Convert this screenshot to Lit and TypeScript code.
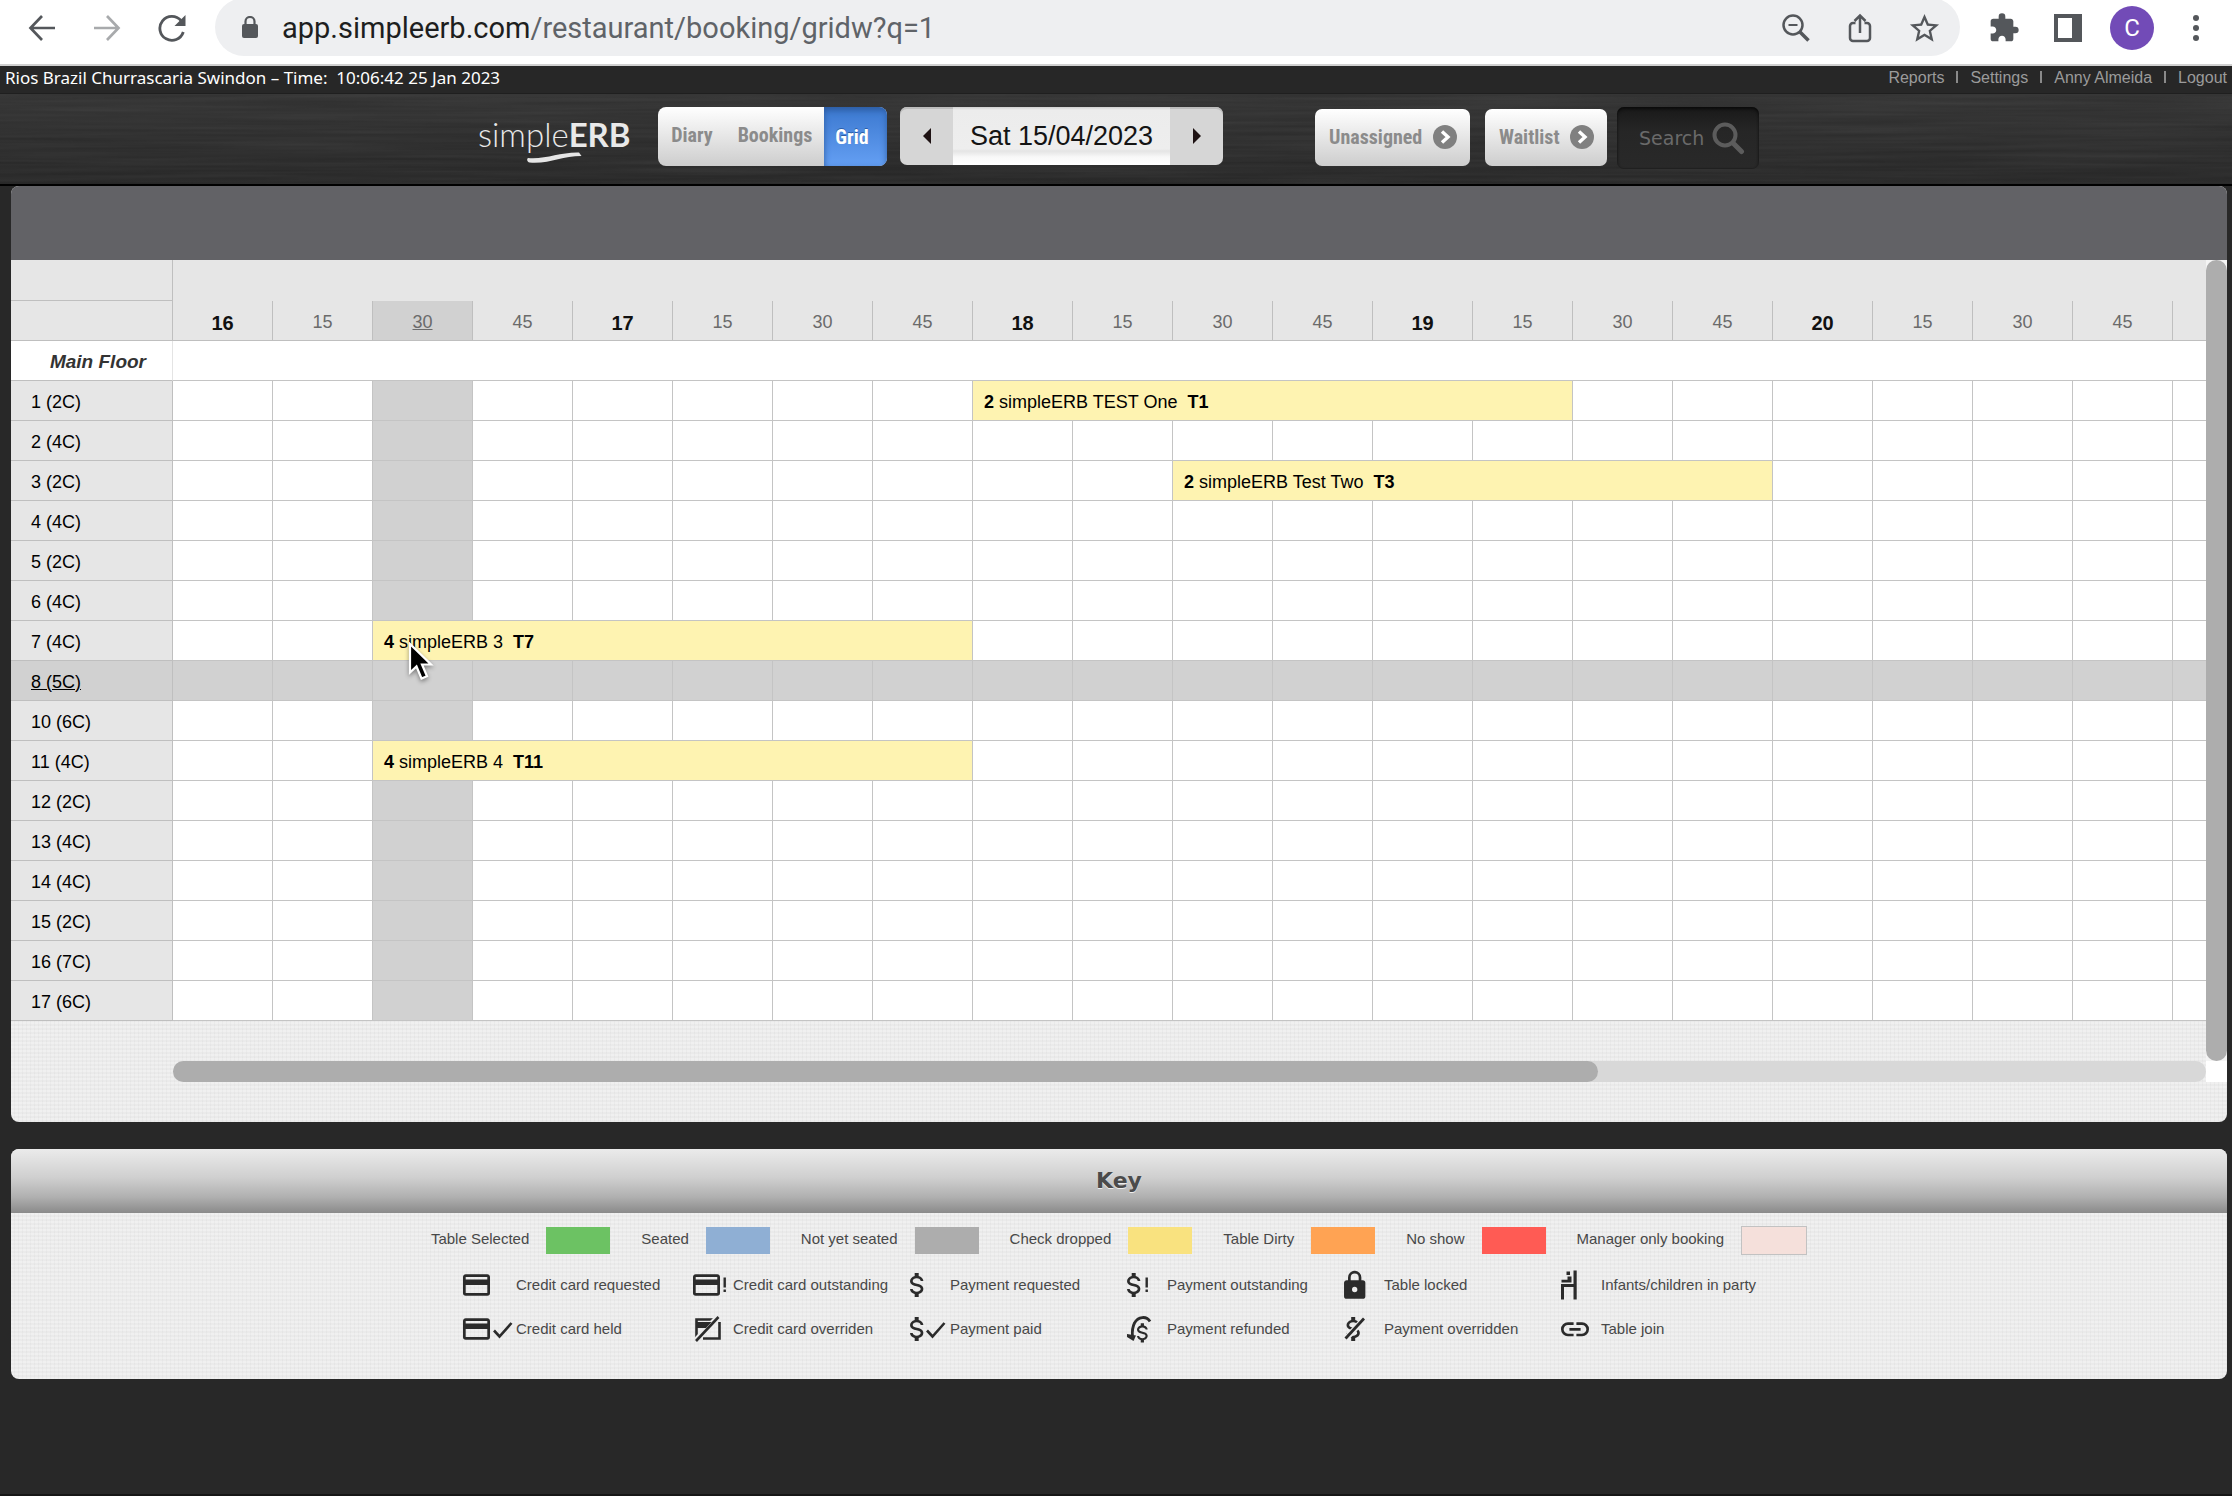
import { LitElement, html, css, svg, nothing, TemplateResult } from "lit";
import { customElement, property } from "lit/decorators.js";
import { classMap } from "lit/directives/class-map.js";
import { styleMap } from "lit/directives/style-map.js";

interface Booking {
  slot: number;
  span: number;
  covers: number;
  name: string;
  table: string;
  pointer?: boolean;
}

interface TableRow {
  label: string;
  hover?: boolean;
  booking?: Booking;
}

const SLOTS = ["16", "15", "30", "45", "17", "15", "30", "45", "18", "15", "30", "45", "19", "15", "30", "45", "20", "15", "30", "45"];
const HOVER_SLOT = 2;

const ROWS: TableRow[] = [
  { label: "1 (2C)", booking: { slot: 8, span: 6, covers: 2, name: "simpleERB TEST One", table: "T1" } },
  { label: "2 (4C)" },
  { label: "3 (2C)", booking: { slot: 10, span: 6, covers: 2, name: "simpleERB Test Two", table: "T3" } },
  { label: "4 (4C)" },
  { label: "5 (2C)" },
  { label: "6 (4C)" },
  { label: "7 (4C)", booking: { slot: 2, span: 6, covers: 4, name: "simpleERB 3", table: "T7", pointer: true } },
  { label: "8 (5C)", hover: true },
  { label: "10 (6C)" },
  { label: "11 (4C)", booking: { slot: 2, span: 6, covers: 4, name: "simpleERB 4", table: "T11" } },
  { label: "12 (2C)" },
  { label: "13 (4C)" },
  { label: "14 (4C)" },
  { label: "15 (2C)" },
  { label: "16 (7C)" },
  { label: "17 (6C)" },
];

const STATUSES = [
  { label: "Table Selected", color: "#6cc263" },
  { label: "Seated", color: "#8fafd4" },
  { label: "Not yet seated", color: "#adadad" },
  { label: "Check dropped", color: "#f9e27f" },
  { label: "Table Dirty", color: "#ffa353" },
  { label: "No show", color: "#ff5b54" },
  { label: "Manager only booking", color: "#f5e0db", outlined: true },
];

const CARD = "M20,8H4V6H20M20,18H4V12H20M20,4H4C2.89,4 2,4.89 2,6V18A2,2 0 0,0 4,20H20A2,2 0 0,0 22,18V6C22,4.89 21.1,4 20,4Z";
const DOLLAR = "M7,15H9C9,16.08 10.37,17 12,17C13.63,17 15,16.08 15,15C15,13.9 13.96,13.5 11.76,12.97C9.64,12.44 7,11.78 7,9C7,7.21 8.47,5.69 10.5,5.18V3H13.5V5.18C15.53,5.69 17,7.21 17,9H15C15,7.92 13.63,7 12,7C10.37,7 9,7.92 9,9C9,10.1 10.04,10.5 12.24,11.03C14.36,11.56 17,12.22 17,15C17,16.79 15.53,18.31 13.5,18.82V21H10.5V18.82C8.47,18.31 7,16.79 7,15Z";
const LOCK = "M12,17A2,2 0 0,0 14,15C14,13.89 13.1,13 12,13A2,2 0 0,0 10,15A2,2 0 0,0 12,17M18,8A2,2 0 0,1 20,10V20A2,2 0 0,1 18,22H6A2,2 0 0,1 4,20V10C4,8.89 4.9,8 6,8H7V6A5,5 0 0,1 12,1A5,5 0 0,1 17,6V8H18M12,3A3,3 0 0,0 9,6V8H15V6A3,3 0 0,0 12,3Z";
const LINK = "M3.9,12C3.9,10.29 5.29,8.9 7,8.9H11V7H7A5,5 0 0,0 2,12A5,5 0 0,0 7,17H11V15.1H7C5.29,15.1 3.9,13.71 3.9,12M8,13H16V11H8V13M17,7H13V8.9H17C18.71,8.9 20.1,10.29 20.1,12C20.1,13.71 18.71,15.1 17,15.1H13V17H17A5,5 0 0,0 22,12A5,5 0 0,0 17,7Z";
const PUZZLE = "M20.5,11H19V7C19,5.89 18.1,5 17,5H13V3.5A2.5,2.5 0 0,0 10.5,1A2.5,2.5 0 0,0 8,3.5V5H4A2,2 0 0,0 2,7V10.8H3.5C5,10.8 6.2,12 6.2,13.5C6.2,15 5,16.2 3.5,16.2H2V20A2,2 0 0,0 4,22H7.8V20.5C7.8,19 9,17.8 10.5,17.8C12,17.8 13.2,19 13.2,20.5V22H17A2,2 0 0,0 19,20V16H20.5A2.5,2.5 0 0,0 23,13.5A2.5,2.5 0 0,0 20.5,11Z";
const STAR = "M22 9.24l-7.19-.62L12 2 9.19 8.63 2 9.24l5.46 4.73L5.82 21 12 17.27 18.18 21l-1.63-7.03L22 9.24zM12 15.4l-3.76 2.27 1-4.28-3.32-2.88 4.38-.38L12 6.1l1.71 4.04 4.38.38-3.32 2.88 1 4.28L12 15.4z";

/* Legend glyphs share a 52x32 canvas whose left edge is the glyph edge. */
const card = svg`<path transform="translate(-2.7 -.2) scale(1.35)" d=${CARD}/>`;
const dollar = svg`<path transform="translate(-9.3 0) scale(1.333)" d=${DOLLAR}/>`;
const bang = (x: number) => svg`<path d="M${x} 8.500h2.400v10h-2.400zM${x} 20.500h2.400v2.600h-2.400z"/>`;
const tick = (x: number) => svg`<path d="M${x + 1} 17.500l5.500 6L${x + 18.500} 10" fill="none" stroke="currentColor" stroke-width="2.600"/>`;

const GLYPHS: Record<string, TemplateResult> = {
  card: svg`${card}`,
  cardBang: svg`${card}${bang(30.5)}`,
  cardTick: svg`${card}${tick(30)}`,
  cardStruck: svg`
    <path d="M3.500 26V6.500h20M3 10.500h18M3 13h16M10 25.500h16.500V9" fill="none" stroke="currentColor" stroke-width="2.600"/>
    <path d="M3 27.500L25 4" fill="none" stroke="#ececec" stroke-width="6"/>
    <path d="M3 28L25.500 4" fill="none" stroke="currentColor" stroke-width="2.600"/>
    <path d="M4 9h14.500l-5.500 6H4z"/>`,
  dollar: svg`${dollar}`,
  dollarBang: svg`${dollar}${bang(18.5)}`,
  dollarTick: svg`${dollar}${tick(16)}`,
  refund: svg`
    <g transform="translate(10 7) scale(.8)">${dollar}</g>
    <path d="M23 8.500C19.500 2.500 11 3.500 7.500 10C5.500 14 5 18 5.500 23" fill="none" stroke="currentColor" stroke-width="2.800"/>
    <path d="M0 21l9 1.500L6.500 28L0 24z"/>`,
  dollarStruck: svg`
    <g transform="translate(2.500 0)">${dollar}</g>
    <path d="M2 25.500L20 6" fill="none" stroke="#ececec" stroke-width="6"/>
    <path d="M1.500 25.500L20 5.500" fill="none" stroke="currentColor" stroke-width="2.800"/>`,
  lock: svg`<path transform="translate(-5.300 .500) scale(1.333)" d=${LOCK}/>`,
  chair: svg`<path d="M12.500 1.500h3.200v29h-3.200v-12.500h-9.500v12.500h-3v-15.500h12.500zM5.500 2.500h3.500v3.500h-3.500zM6.500 7.500h4v6h-10v-2.800h6z"/>`,
  link: svg`<path transform="translate(-2.800 -.500) scale(1.400)" d=${LINK}/>`,
};

const KEY_ITEMS: [string, string][] = [
  ["card", "Credit card requested"],
  ["cardBang", "Credit card outstanding"],
  ["dollar", "Payment requested"],
  ["dollarBang", "Payment outstanding"],
  ["lock", "Table locked"],
  ["chair", "Infants/children in party"],
  ["cardTick", "Credit card held"],
  ["cardStruck", "Credit card overriden"],
  ["dollarTick", "Payment paid"],
  ["refund", "Payment refunded"],
  ["dollarStruck", "Payment overridden"],
  ["link", "Table join"],
];

const resets = css`
  *, *::before, *::after { box-sizing: border-box; }
  button { font: inherit; color: inherit; background: none; border: 0; padding: 0; margin: 0; cursor: pointer; }
  a { color: inherit; text-decoration: none; }
  svg { display: block; flex: none; }
  ul { list-style: none; margin: 0; padding: 0; }
`;

@customElement("browser-bar")
export class BrowserBar extends LitElement {
  static styles = [resets, css`
    :host { display: block; }
    .bar {
      display: flex; align-items: flex-start; height: 66px; overflow: hidden;
      background: #fff; border-bottom: 2px solid #d0d0d0; color: #54575b;
    }
    .nav { display: flex; width: 215px; padding-left: 20px; height: 56px; align-items: center; gap: 21px; }
    .nav button { width: 44px; display: flex; justify-content: center; }
    .off { color: #a8aaac; }
    .pill {
      flex: 1; display: flex; align-items: center; height: 58px; margin-top: -2px;
      padding: 2px 16px 0 24px; border-radius: 29px; background: #eeeff1;
    }
    .url {
      flex: 1; margin-left: 21px; white-space: nowrap; color: #5f6368;
      font: 29px/36px Roboto, "Liberation Sans", sans-serif;
    }
    .host { color: #1d1e20; }
    .acts { display: flex; gap: 24px; }
    .acts button { width: 40px; height: 40px; display: grid; place-items: center; }
    .tools { display: flex; align-items: center; gap: 20px; height: 56px; padding: 0 14px 0 22px; }
    .tools button { width: 44px; height: 44px; display: grid; place-items: center; }
    .tools .face {
      border-radius: 50%; background: #724bb7; color: #fff;
      font: 24px/44px Roboto, "Liberation Sans", sans-serif;
    }
  `];

  render() {
    return html`
      <div class="bar">
        <div class="nav">
          <button aria-label="Back">
            <svg width="28" height="28" viewBox="0 0 28 28" fill="none" stroke="currentColor" stroke-width="2.700"><path d="M27 14H2.500M14 2L2.500 14L14 26"/></svg>
          </button>
          <button class="off" aria-label="Forward">
            <svg width="28" height="28" viewBox="0 0 28 28" fill="none" stroke="currentColor" stroke-width="2.700"><path d="M1 14H25.500M14 2L25.500 14L14 26"/></svg>
          </button>
          <button aria-label="Reload">
            <svg width="28" height="28" viewBox="0 0 28 28" fill="none" stroke="currentColor" stroke-width="2.800"><path d="M25.300 18A12 12 0 1 1 23 6.500"/><path d="M27.500 1v11h-11z" fill="currentColor" stroke="none"/></svg>
          </button>
        </div>
        <div class="pill">
          <svg width="22" height="24" viewBox="0 0 22 24"><rect x="3" y="8" width="16" height="14" rx="2" fill="currentColor"/><path d="M6.500 9V5.500a4.500 4.500 0 0 1 9 0V9" fill="none" stroke="currentColor" stroke-width="2.200"/></svg>
          <div class="url" role="textbox" aria-label="Address" tabindex="0"><span class="host">app.simpleerb.com</span>/restaurant/booking/gridw?q=1</div>
          <div class="acts">
            <button aria-label="Zoom out">
              <svg width="30" height="30" viewBox="0 0 30 30" fill="none" stroke="currentColor"><circle cx="12" cy="12" r="9.500" stroke-width="2.500"/><path d="M7.500 12h9" stroke-width="2"/><path d="M19 19l8.500 8.500" stroke-width="3.500"/></svg>
            </button>
            <button aria-label="Share">
              <svg width="26" height="32" viewBox="0 0 26 32" fill="none" stroke="currentColor" stroke-width="2.500"><path d="M8.500 11H6a3 3 0 0 0-3 3v12a3 3 0 0 0 3 3h14a3 3 0 0 0 3-3V14a3 3 0 0 0-3-3h-2.500M13 21V3.500M7.500 9L13 3.500L18.500 9"/></svg>
            </button>
            <button aria-label="Bookmark">
              <svg width="35" height="35" viewBox="0 0 24 24" fill="currentColor"><path d=${STAR}/></svg>
            </button>
          </div>
        </div>
        <div class="tools">
          <button aria-label="Extensions"><svg width="32" height="32" viewBox="0 0 24 24" fill="currentColor"><path d=${PUZZLE}/></svg></button>
          <button aria-label="Side panel"><svg width="28" height="28" viewBox="0 0 28 28" fill="currentColor"><path fill-rule="evenodd" d="M0 0h28v28H0zM4 4v20h14V4z"/></svg></button>
          <button class="face" aria-label="Profile">C</button>
          <button aria-label="Menu"><svg width="8" height="28" viewBox="0 0 8 28" fill="currentColor"><circle cx="4" cy="4" r="3"/><circle cx="4" cy="14" r="3"/><circle cx="4" cy="24" r="3"/></svg></button>
        </div>
      </div>`;
  }
}

@customElement("app-header")
export class AppHeader extends LitElement {
  static styles = [resets, css`
    :host { display: block; font-family: "Liberation Sans", Arial, sans-serif; }
    .top {
      display: flex; justify-content: space-between; height: 28px; padding: 0 5px;
      background: #272727; border-bottom: 1px solid #1f1f1f;
    }
    .venue { color: #fff; font: 400 17px/24px "Noto Sans", "Open Sans", sans-serif; white-space: pre; }
    .links { display: flex; font-size: 16px; line-height: 23px; color: #9b9b9b; }
    .links li + li::before { content: ""; display: inline-block; width: 2px; height: 12px; margin: 0 12px; background: #8a8a8a; }
    .main {
      position: relative; display: flex; justify-content: center; height: 92px; padding: 13px 6px 0 11px;
      background: linear-gradient(#303030, #242424); border-bottom: 2px solid #000;
    }
    .grain { position: absolute; inset: 0; width: 100%; height: 100%; opacity: .1; }
    .logo { position: relative; width: 180px; color: #e9e9e9; font: 300 33px/54px Lato, "Open Sans", sans-serif; }
    .logo b { font-weight: 700; }
    .swoosh { position: absolute; left: 48px; top: 44px; }
    .cond { font-family: "Liberation Sans Narrow", "Roboto Condensed", "DejaVu Sans Condensed", sans-serif; font-weight: 700; font-size: 20px; color: #8b8b8b; }
    .tabs { position: relative; display: grid; grid-template-columns: 68fr 98fr 63fr; width: 229px; height: 59px; border-radius: 8px; overflow: hidden; background: linear-gradient(#fff, #cdcdcd); }
    .tabs a { display: grid; place-items: center; padding-bottom: 4px; }
    .tabs a.on { padding: 0 7px 0 0; color: #fff; background: linear-gradient(#3b78cf, #649ff3); box-shadow: inset 0 3px 6px #2c5a9e; text-shadow: 0 -1px 0 #2b5da8; }
    .date { position: relative; display: flex; width: 323px; height: 58px; margin-left: 13px; border-radius: 7px; overflow: hidden; background: #d6d6d6; box-shadow: inset 0 2px 0 #bdbdbd; }
    .step { width: 53px; display: grid; place-items: center; }
    .day { flex: 1; font-size: 27px; color: #141414; background: linear-gradient(#cfcfcf 0, #ececec 3px, #eee 42px, #e4e4e4 44px, #f8f8f8 50px, #fff); }
    .push {
      position: relative; display: flex; align-items: center; justify-content: space-between; height: 57px; margin: 2px 0 0 92px; padding: 0 13px 2px 14px;
      border-radius: 7px; background: linear-gradient(#fff, #cdcdcd);
    }
    .un { width: 155px; }
    .wait { width: 122px; margin-left: 15px; }
    .search {
      position: relative; display: flex; align-items: center; width: 142px; height: 61px; margin-left: 10px; padding: 0 14px 0 20px;
      border-radius: 7px; background: linear-gradient(#191919, #262626 40%, #292929); box-shadow: inset 0 2px 3px #0a0a0a, 0 1px 0 #202020;
    }
    .search input { width: 74px; padding: 0 0 0 2px; border: 0; outline: 0; background: none; color: #888; font: 19px/24px "DejaVu Sans", sans-serif; }
    .search input::placeholder { color: #6a6a6a; opacity: 1; }
  `];

  private chevron = svg`<svg width="24" height="24" viewBox="0 0 24 24"><circle cx="12" cy="12" r="12" fill="#808080"/><path d="M9 6.500l6 5.500l-6 5.500" fill="none" stroke="#fff" stroke-width="3.400"/></svg>`;

  render() {
    return html`
      <div class="top">
        <div class="venue">Rios Brazil Churrascaria Swindon – Time:  10:06:42 25 Jan 2023</div>
        <ul class="links">
          ${["Reports", "Settings", "Anny Almeida", "Logout"].map((t) => html`<li><a href="#">${t}</a></li>`)}
        </ul>
      </div>
      <header class="main">
        <svg class="grain" aria-hidden="true">
          <filter id="brushed"><feTurbulence type="fractalNoise" baseFrequency="0.005 0.25" numOctaves="2" seed="4"/><feColorMatrix type="saturate" values="0"/></filter>
          <rect width="100%" height="100%" filter="url(#brushed)"/>
        </svg>
        <div class="logo">simple<b>ERB</b>
          <svg class="swoosh" width="56" height="14" viewBox="0 0 56 14"><path d="M2 7C20 8.500 34 1 53 1.500L55.500 5C36 5 24 13 3.500 11.500C1 11 .500 8 2 7z" fill="#e6e6e6"/></svg>
        </div>
        <nav class="tabs cond">
          <a href="#">Diary</a><a href="#">Bookings</a><a class="on" href="#" aria-current="page">Grid</a>
        </nav>
        <div class="date">
          <button class="step" aria-label="Previous day"><svg width="8" height="16" viewBox="0 0 8 16"><path d="M8 0v16L0 8z" fill="#1e1213"/></svg></button>
          <button class="day">Sat 15/04/2023</button>
          <button class="step" aria-label="Next day"><svg width="8" height="16" viewBox="0 0 8 16"><path d="M0 0v16l8-8z" fill="#1e1213"/></svg></button>
        </div>
        <button class="push un cond">Unassigned ${this.chevron}</button>
        <button class="push wait cond">Waitlist ${this.chevron}</button>
        <label class="search">
          <input type="text" placeholder="Search" aria-label="Search" />
          <svg width="34" height="34" viewBox="0 0 34 34" fill="none" stroke="#5c5c5c"><circle cx="14" cy="14" r="10.500" stroke-width="4"/><path d="M22 22l8.500 8.500" stroke-width="5" stroke-linecap="round"/></svg>
        </label>
      </header>`;
  }
}

@customElement("booking-grid")
export class BookingGrid extends LitElement {
  @property({ attribute: false }) rows: TableRow[] = ROWS;

  static styles = [resets, css`
    :host { display: block; font-family: "Liberation Sans", Arial, sans-serif; }
    .strip { height: 74px; background: #626266; }
    .view { display: grid; grid-template-columns: minmax(0, 1fr) 21px; }
    .sheet { overflow: hidden; padding-bottom: 40px; }
    table { width: 100%; table-layout: fixed; border-collapse: separate; border-spacing: 0; font-size: 18px; color: #000; }
    .c-label { width: 162px; }
    .c-slot { width: 100px; }
    tr { height: 40px; }
    th, td { padding: 2px 0 0; background: #fff; border: solid #bfbfbf; border-width: 0 1px 1px 0; white-space: nowrap; line-height: 20px; }
    tr > :last-child { border-right: 0; }
    .first { height: 41px; }
    .first th, .first td, .times th { background: #e6e6e6; }
    .first td { border-bottom: 0; }
    .times th { font-weight: 400; color: #6b6b6b; text-align: center; }
    .times .hour { font-size: 20px; font-weight: 700; color: #111; padding-top: 4px; }
    .times .hover, .hover td, .hover th.name, td.hover { background: #d1d1d1; }
    .times .hover, .hover .name { text-decoration: underline; }
    .floor th { text-align: right; padding-right: 26px; font-size: 19px; font-style: italic; color: #333; border-right-color: #e4e4e4; }
    .name { text-align: left; padding-left: 20px; font-weight: 400; background: #e6e6e6; }
    .tables td { border-color: #c4c4c4; }
    .tables .booking { position: relative; padding-left: 11px; background: #fef3b1; white-space: pre; }
    .pointer { position: absolute; left: 35px; top: 21px; z-index: 1; filter: drop-shadow(0 2px 2px #0006); }
    .bars-v { border-radius: 11px; background: #adadad; }
    .corner { background: #fff; height: 21px; }
    .track { margin-left: 162px; height: 21px; border-radius: 11px; background: #d8d8d8; }
    .thumb { height: 21px; border-radius: 11px; background: #adadad; }
    .rail { background: #f4f4f4; display: grid; }
  `];

  private cells(row: TableRow) {
    const out: TemplateResult[] = [];
    for (let i = 0; i <= SLOTS.length; i++) {
      const b = row.booking;
      if (b && b.slot === i) {
        out.push(html`<td class="booking" colspan=${b.span}><b>${b.covers}</b> ${b.name}  <b>${b.table}</b>${b.pointer ? this.pointer : nothing}</td>`);
        i += b.span - 1;
      } else {
        out.push(html`<td class=${classMap({ hover: i === HOVER_SLOT })}></td>`);
      }
    }
    return out;
  }

  /* No whitespace around the svg: booking cells preserve it as line breaks. */
  private pointer = html`<svg class="pointer" width="26" height="40" viewBox="0 0 26 40" aria-hidden="true"><path d="M2 2v28.500l6.500-6l5 12l5.500-2.300l-5-11.700h9z" fill="#000" stroke="#fff" stroke-width="2.200"/></svg>`;

  render() {
    return html`
      <div class="strip"></div>
      <div class="view">
        <div class="sheet">
          <table>
            <colgroup>
              <col class="c-label" />${SLOTS.map(() => html`<col class="c-slot" />`)}<col />
            </colgroup>
            <thead>
              <tr class="first"><th></th><td colspan=${SLOTS.length + 1}></td></tr>
              <tr class="times">
                <th></th>
                ${SLOTS.map((t, i) => html`<th scope="col" class=${classMap({ hour: i % 4 === 0, hover: i === HOVER_SLOT })}>${t}</th>`)}
                <th></th>
              </tr>
            </thead>
            <tbody class="tables">
              <tr class="floor"><th scope="rowgroup">Main Floor</th><td colspan=${SLOTS.length + 1}></td></tr>
              ${this.rows.map((r) => html`<tr class=${classMap({ hover: !!r.hover })}><th class="name" scope="row">${r.label}</th>${this.cells(r)}</tr>`)}
            </tbody>
          </table>
        </div>
        <div class="rail"><div class="bars-v"></div></div>
        <div class="track"><div class="thumb" style=${styleMap({ width: "70.1%" })}></div></div>
        <div class="corner"></div>
      </div>`;
  }
}

@customElement("grid-key")
export class GridKey extends LitElement {
  static styles = [resets, css`
    :host { display: block; font-family: "Liberation Sans", Arial, sans-serif; font-size: 15px; line-height: 20px; color: #484848; }
    h2 {
      margin: 0; height: 64px; text-align: center; font: 700 22px/64px "DejaVu Sans", sans-serif; color: #4b4b4b;
      text-shadow: 0 1px 0 #eee; background: linear-gradient(#ebebeb, #cfcfcf 45%, #b0b0b0 75%, #8a8a8a);
    }
    .status { display: flex; justify-content: center; gap: 31px; padding-top: 14px; }
    .status li { display: flex; gap: 17px; }
    .status li > span { line-height: 24px; }
    .swatch { width: 64px; height: 27px; }
    .outlined { width: 66px; height: 29px; margin-top: -1px; border: 1px solid #c2c2c2; }
    .items { display: grid; grid-template-columns: 230px repeat(5, 217px); grid-auto-rows: 44px; justify-content: center; padding: 8px 0 28px 3px; }
    .items li { display: flex; align-items: center; white-space: nowrap; }
    .items svg { width: 40px; height: 32px; overflow: visible; color: #2b2b2b; }
    .items li:nth-child(6n + 1) svg { width: 53px; }
  `];

  render() {
    return html`
      <h2>Key</h2>
      <ul class="status">
        ${STATUSES.map((s) => html`<li><span>${s.label}</span><i class=${classMap({ swatch: true, outlined: !!s.outlined })} style=${styleMap({ background: s.color })}></i></li>`)}
      </ul>
      <ul class="items">
        ${KEY_ITEMS.map(([g, label]) => html`<li><svg fill="currentColor" aria-hidden="true">${GLYPHS[g]}</svg><span>${label}</span></li>`)}
      </ul>`;
  }
}

@customElement("app-root")
export class AppRoot extends LitElement {
  static styles = css`
    :host { display: block; min-height: 100vh; background: #282828; box-shadow: inset 0 -2px 0 #161616; }
    .body { display: grid; gap: 27px; padding: 0 5px 0 11px; }
    .panel {
      border-radius: 8px; overflow: hidden;
      background:
        repeating-linear-gradient(#0000 0 2px, #00000006 2px 4px),
        repeating-linear-gradient(90deg, #0000 0 3px, #00000006 3px 4px),
        #f0f0f0;
    }
    .grid { padding-bottom: 40px; }
  `;

  render() {
    return html`
      <browser-bar></browser-bar>
      <app-header></app-header>
      <main class="body">
        <booking-grid class="panel grid"></booking-grid>
        <grid-key class="panel"></grid-key>
      </main>`;
  }
}
